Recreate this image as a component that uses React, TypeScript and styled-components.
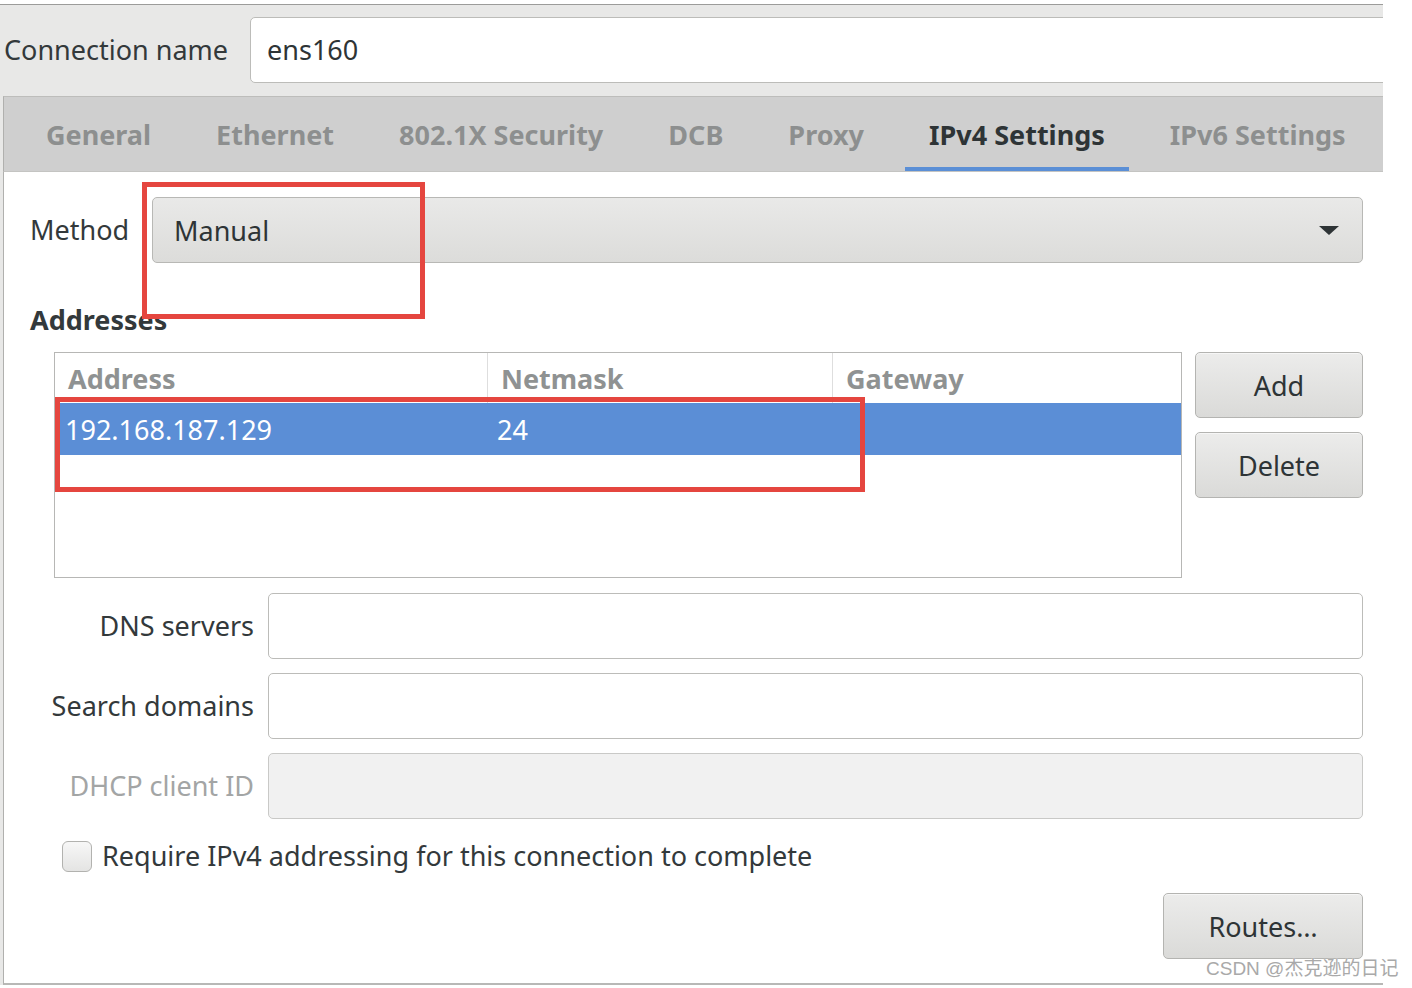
import React from "react";
import styled, { createGlobalStyle } from "styled-components";

const GlobalStyle = createGlobalStyle`
  html, body {
    margin: 0;
    padding: 0;
    background: #ffffff;
  }
  body {
    font-family: "Noto Sans", "Open Sans", sans-serif;
    color: #33393b;
  }
`;

const Page = styled.div`
  position: relative;
  width: 1412px;
  height: 988px;
  overflow: hidden;
  padding-top: 4px;
  box-sizing: border-box;
`;

const Dialog = styled.div`
  width: 1383px;
  border-top: 1px solid #9c9c9a;
  background: #e8e8e7;
  overflow: hidden;
`;

const NameRow = styled.div`
  display: flex;
  align-items: center;
  height: 89px;
  padding: 0 0 2px 4px;
  gap: 22px;
`;

const Label = styled.span<{ $dim?: boolean; $bold?: boolean }>`
  font-size: 27px;
  line-height: 34px;
  white-space: nowrap;
  color: ${(p) => (p.$dim ? "#a3a5a5" : "#33393b")};
  font-weight: ${(p) => (p.$bold ? 700 : 400)};
`;

const TextInput = styled.div<{ $disabled?: boolean; $bleed?: boolean }>`
  flex: 1;
  height: 66px;
  box-sizing: border-box;
  display: flex;
  align-items: center;
  padding-left: 16px;
  margin-right: ${(p) => (p.$bleed ? "-20px" : "0")};
  border: 1px solid ${(p) => (p.$disabled ? "#c9c9c7" : "#bcbcb9")};
  border-radius: 5px;
  background: ${(p) => (p.$disabled ? "#f1f1f1" : "#ffffff")};
  font-size: 27px;
  color: #2e3436;
`;

const TabBar = styled.div`
  display: flex;
  height: 74px;
  margin-left: 3px;
  padding-left: 18px;
  gap: 17px;
  border-left: 1px solid #b0b0ae;
  border-top: 1px solid #bdbdbb;
  border-bottom: 1px solid #c4c4c2;
  background: #cfcfcf;
`;

const Tab = styled.div<{ $active?: boolean }>`
  display: flex;
  align-items: center;
  padding: 0 24px;
  font-size: 27px;
  font-weight: 700;
  white-space: nowrap;
  color: ${(p) => (p.$active ? "#2e3436" : "#8d8f8f")};
  box-shadow: ${(p) => (p.$active ? "inset 0 -4px 0 #5b8fd6" : "none")};
`;

const Panel = styled.div`
  margin-left: 3px;
  padding: 25px 20px 24px 26px;
  border-left: 1px solid #b0b0ae;
  border-bottom: 2px solid #b8b8b6;
  background: #ffffff;
`;

const MethodRow = styled.div`
  display: flex;
  align-items: center;
`;

const MethodLabel = styled(Label)`
  width: 122px;
`;

const Combo = styled.div`
  flex: 1;
  height: 66px;
  box-sizing: border-box;
  display: flex;
  align-items: center;
  justify-content: space-between;
  padding: 0 23px 0 21px;
  border: 1px solid #b8b8b5;
  border-radius: 5px;
  background: linear-gradient(#e9e9e8, #dcdcda);
  font-size: 27px;
  color: #2e3436;
`;

const Arrow = styled.span`
  width: 0;
  height: 0;
  border-left: 10px solid transparent;
  border-right: 10px solid transparent;
  border-top: 9px solid #2e3436;
`;

const Heading = styled(Label)`
  display: block;
  margin-top: 40px;
  margin-bottom: 15px;
`;

const AddressArea = styled.div`
  display: flex;
  gap: 13px;
  margin-left: 24px;
`;

const Table = styled.div`
  flex: 1;
  height: 226px;
  box-sizing: border-box;
  border: 1px solid #b7b7b5;
  background: #ffffff;
`;

const TableRow = styled.div<{ $selected?: boolean }>`
  display: grid;
  grid-template-columns: 432px 345px 1fr;
  height: ${(p) => (p.$selected ? "52px" : "50px")};
  background: ${(p) => (p.$selected ? "#5b8ed6" : "transparent")};
  color: ${(p) => (p.$selected ? "#ffffff" : "#2e3436")};
`;

const HeadCell = styled.div`
  display: flex;
  align-items: center;
  padding-left: 13px;
  font-size: 27px;
  font-weight: 700;
  color: #8f9292;
  border-left: 1px solid #dedede;
  &:first-child {
    border-left: none;
  }
`;

const Cell = styled.div`
  display: flex;
  align-items: center;
  padding-left: 10px;
  font-size: 27px;
`;

const ButtonColumn = styled.div`
  display: flex;
  flex-direction: column;
  gap: 14px;
`;

const Button = styled.div<{ $width: number }>`
  width: ${(p) => p.$width}px;
  height: 66px;
  box-sizing: border-box;
  display: flex;
  align-items: center;
  justify-content: center;
  border: 1px solid #b4b4b1;
  border-radius: 5px;
  background: linear-gradient(#ececeb, #dadad8);
  box-shadow: inset 0 1px 0 #f6f6f6;
  font-size: 27px;
  color: #2e3436;
`;

const FieldGrid = styled.div`
  display: grid;
  grid-template-columns: 200px 1fr;
  column-gap: 14px;
  row-gap: 14px;
  margin: 15px 0 0 24px;
  align-items: center;
`;

const FieldLabel = styled(Label)`
  text-align: right;
  justify-self: end;
`;

const CheckRow = styled.div`
  display: flex;
  align-items: center;
  gap: 10px;
  margin: 21px 0 0 32px;
  height: 32px;
`;

const CheckBox = styled.span`
  width: 30px;
  height: 31px;
  box-sizing: border-box;
  border: 1px solid #b2b2af;
  border-radius: 6px;
  background: linear-gradient(#f7f7f7, #e4e4e3);
`;

const Footer = styled.div`
  display: flex;
  justify-content: flex-end;
  margin-top: 21px;
`;

const Annotation = styled.div<{ $x: number; $y: number; $w: number; $h: number }>`
  position: absolute;
  left: ${(p) => p.$x}px;
  top: ${(p) => p.$y}px;
  width: ${(p) => p.$w}px;
  height: ${(p) => p.$h}px;
  box-sizing: border-box;
  border: 5px solid #e5463f;
  pointer-events: none;
`;

const Watermark = styled.div`
  position: absolute;
  left: 1206px;
  top: 957px;
  font-family: "Liberation Sans", "Noto Sans CJK SC", sans-serif;
  font-size: 19px;
  line-height: 24px;
  color: #a9a9a9;
  text-shadow: 0 0 1px #ffffff;
  white-space: nowrap;
`;

const tabs = [
  "General",
  "Ethernet",
  "802.1X Security",
  "DCB",
  "Proxy",
  "IPv4 Settings",
  "IPv6 Settings",
];

export default function App() {
  return (
    <>
      <GlobalStyle />
      <Page>
        <Dialog>
          <NameRow>
            <Label>Connection name</Label>
            <TextInput $bleed>ens160</TextInput>
          </NameRow>
          <TabBar>
            {tabs.map((t) => (
              <Tab key={t} $active={t === "IPv4 Settings"}>
                {t}
              </Tab>
            ))}
          </TabBar>
          <Panel>
            <MethodRow>
              <MethodLabel>Method</MethodLabel>
              <Combo>
                Manual
                <Arrow />
              </Combo>
            </MethodRow>
            <Heading $bold>Addresses</Heading>
            <AddressArea>
              <Table>
                <TableRow>
                  <HeadCell>Address</HeadCell>
                  <HeadCell>Netmask</HeadCell>
                  <HeadCell>Gateway</HeadCell>
                </TableRow>
                <TableRow $selected>
                  <Cell>192.168.187.129</Cell>
                  <Cell>24</Cell>
                  <Cell />
                </TableRow>
              </Table>
              <ButtonColumn>
                <Button $width={168}>Add</Button>
                <Button $width={168}>Delete</Button>
              </ButtonColumn>
            </AddressArea>
            <FieldGrid>
              <FieldLabel>DNS servers</FieldLabel>
              <TextInput />
              <FieldLabel>Search domains</FieldLabel>
              <TextInput />
              <FieldLabel $dim>DHCP client ID</FieldLabel>
              <TextInput $disabled />
            </FieldGrid>
            <CheckRow>
              <CheckBox />
              <Label>Require IPv4 addressing for this connection to complete</Label>
            </CheckRow>
            <Footer>
              <Button $width={200}>Routes…</Button>
            </Footer>
          </Panel>
        </Dialog>
        <Annotation $x={142} $y={182} $w={283} $h={137} />
        <Annotation $x={55} $y={397} $w={810} $h={95} />
        <Watermark>CSDN @杰克逊的日记</Watermark>
      </Page>
    </>
  );
}
